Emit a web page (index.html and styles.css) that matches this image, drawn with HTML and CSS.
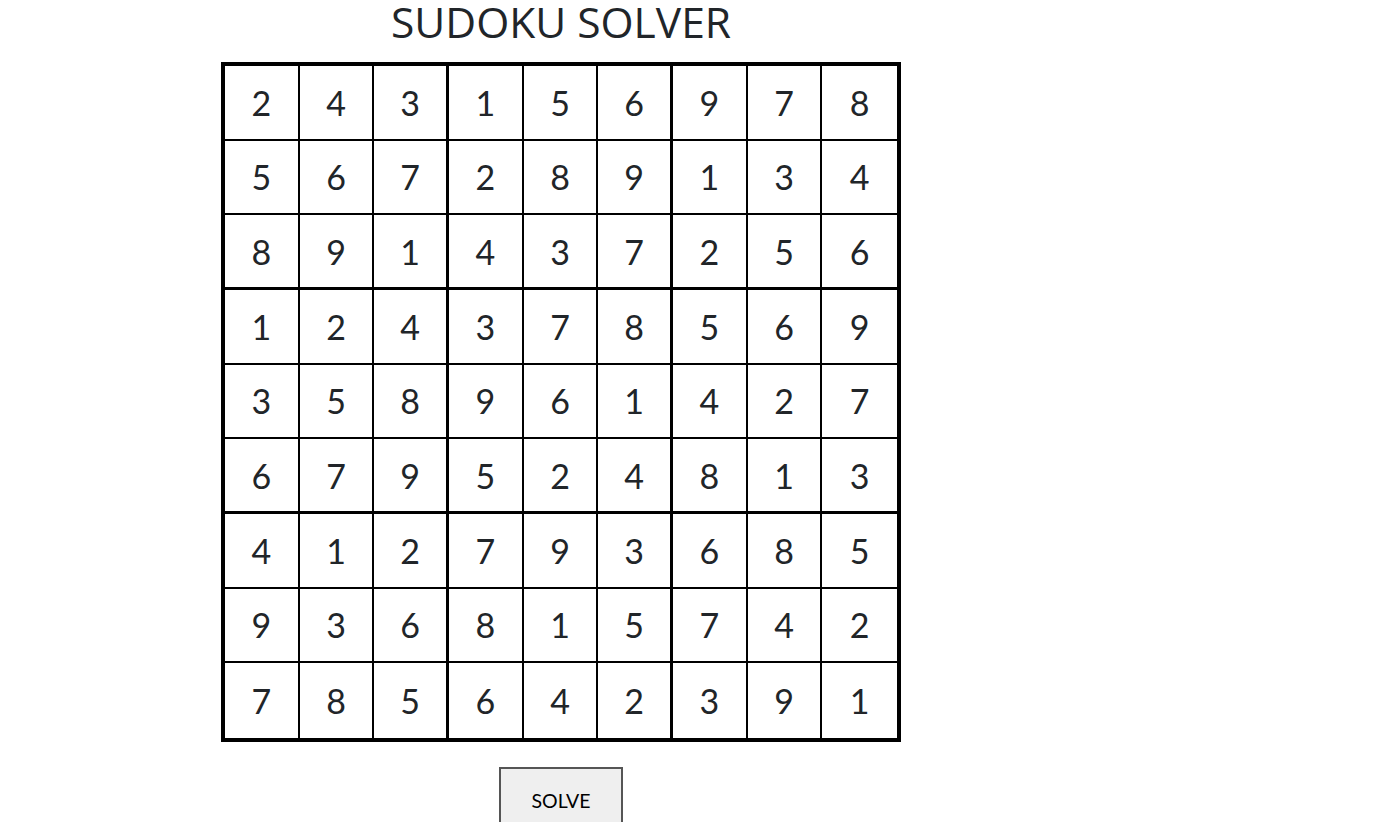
FILE: index.html
```html
<!DOCTYPE html>
<html lang="en">
<head>
<meta charset="utf-8">
<title>Sudoku Solver</title>
<link rel="stylesheet" href="styles.css">
</head>
<body>
<main class="wrap">
  <h1 class="title">SUDOKU SOLVER</h1>
  <div class="board">
    <div class="cell">2</div><div class="cell">4</div><div class="cell bx">3</div><div class="cell">1</div><div class="cell">5</div><div class="cell bx">6</div><div class="cell">9</div><div class="cell">7</div><div class="cell ex">8</div>
    <div class="cell">5</div><div class="cell">6</div><div class="cell bx">7</div><div class="cell">2</div><div class="cell">8</div><div class="cell bx">9</div><div class="cell">1</div><div class="cell">3</div><div class="cell ex">4</div>
    <div class="cell by">8</div><div class="cell by">9</div><div class="cell bx by">1</div><div class="cell by">4</div><div class="cell by">3</div><div class="cell bx by">7</div><div class="cell by">2</div><div class="cell by">5</div><div class="cell ex by">6</div>
    <div class="cell">1</div><div class="cell">2</div><div class="cell bx">4</div><div class="cell">3</div><div class="cell">7</div><div class="cell bx">8</div><div class="cell">5</div><div class="cell">6</div><div class="cell ex">9</div>
    <div class="cell">3</div><div class="cell">5</div><div class="cell bx">8</div><div class="cell">9</div><div class="cell">6</div><div class="cell bx">1</div><div class="cell">4</div><div class="cell">2</div><div class="cell ex">7</div>
    <div class="cell by">6</div><div class="cell by">7</div><div class="cell bx by">9</div><div class="cell by">5</div><div class="cell by">2</div><div class="cell bx by">4</div><div class="cell by">8</div><div class="cell by">1</div><div class="cell ex by">3</div>
    <div class="cell">4</div><div class="cell">1</div><div class="cell bx">2</div><div class="cell">7</div><div class="cell">9</div><div class="cell bx">3</div><div class="cell">6</div><div class="cell">8</div><div class="cell ex">5</div>
    <div class="cell">9</div><div class="cell">3</div><div class="cell bx">6</div><div class="cell">8</div><div class="cell">1</div><div class="cell bx">5</div><div class="cell">7</div><div class="cell">4</div><div class="cell ex">2</div>
    <div class="cell ey">7</div><div class="cell ey">8</div><div class="cell bx ey">5</div><div class="cell ey">6</div><div class="cell ey">4</div><div class="cell bx ey">2</div><div class="cell ey">3</div><div class="cell ey">9</div><div class="cell ex ey">1</div>
  </div>
  <div class="actions">
    <button class="solve" type="button">SOLVE</button>
  </div>
</main>
</body>
</html>
```
FILE: styles.css
```css
html, body {
  margin: 0;
  padding: 0;
  background: #ffffff;
}

body {
  font-family: Lato, "Open Sans", sans-serif;
  color: #212529;
}

.wrap {
  margin-left: 221px;
  width: 680px;
  display: flex;
  flex-direction: column;
  align-items: center;
}

.title {
  margin: -7px 0 11px 0;
  font-family: "Open Sans", Lato, sans-serif;
  font-size: 42.5px;
  line-height: 58px;
  font-weight: 400;
  color: #212529;
  white-space: nowrap;
}

.board {
  box-sizing: border-box;
  width: 680px;
  height: 680px;
  border: 4px solid #000;
  display: grid;
  grid-template-columns: repeat(9, 1fr);
  grid-template-rows: repeat(9, 1fr);
}

.cell {
  box-sizing: border-box;
  border-right: 2px solid #000;
  border-bottom: 2px solid #000;
  display: flex;
  align-items: center;
  justify-content: center;
  font-size: 34px;
  color: #212529;
}

.cell.bx {
  border-right-width: 3px;
}

.cell.by {
  border-bottom-width: 3px;
}

.cell.ex {
  border-right: 0;
}

.cell.ey {
  border-bottom: 0;
}

.actions {
  margin-top: 25px;
  display: flex;
  justify-content: center;
}

.solve {
  box-sizing: border-box;
  width: 124px;
  height: 66px;
  border: 2px solid #555;
  border-radius: 0;
  background: #efefef;
  color: #000;
  font-family: Lato, sans-serif;
  font-size: 19.5px;
  padding: 0;
}
```
